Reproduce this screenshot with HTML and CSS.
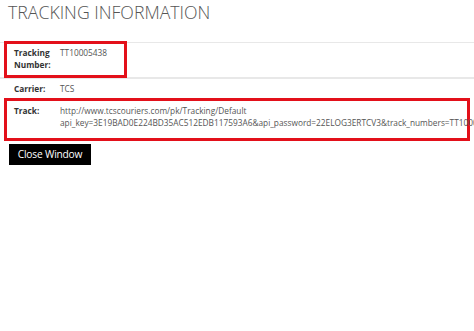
FILE: index.html
```html
<!DOCTYPE html>
<html lang="en">
<head>
    <meta charset="UTF-8">
    <meta name="viewport" content="width=device-width, initial-scale=1.0">
    <title>Tracking Information</title>
    <link rel="stylesheet" href="styles.css">
</head>
<body>
    <div class="page">
        <h1 class="title">TRACKING INFORMATION</h1>

        <div class="info">
            <div class="row row-first">
                <div class="mark mark-short">
                    <div class="label">Tracking Number:</div>
                    <div class="value">TT10005438</div>
                </div>
            </div>
            <div class="row">
                <div class="cell">
                    <div class="label">Carrier:</div>
                    <div class="value">TCS</div>
                </div>
            </div>
            <div class="row row-track">
                <div class="mark mark-wide">
                    <div class="label">Track:</div>
                    <div class="value url">http://www.tcscouriers.com/pk/Tracking/Default<br>api_key=3E19BAD0E224BD35AC512EDB117593A6&amp;api_password=22ELOG3ERTCV3&amp;track_numbers=TT10005438</div>
                </div>
            </div>
        </div>

        <button class="close-btn" onclick="window.close()">Close Window</button>
    </div>
</body>
</html>
```

FILE: styles.css
```css
body {
    margin: 0;
    background-color: #fff;
    font-family: "Open Sans", Arial, sans-serif;
    overflow-x: hidden;
}
.page {
    width: 474px;
}
.title {
    margin: 0 0 18px 8px;
    font-size: 17.7px;
    font-weight: 300;
    line-height: 24px;
    color: #555;
}
.info {
    font-size: 8.3px;
    line-height: 12px;
    color: #555;
}
.row {
    border-top: 1px solid #e8e8e8;
}
.row-first {
    border-bottom: 1px solid #e8e8e8;
}
.row-track {
    border-top: none;
}
.mark,
.cell {
    display: flex;
}
.mark {
    border: 3px solid #e3101a;
    margin-left: 4px;
}
.mark-short {
    width: 110px;
    padding: 3px 0 4px 7px;
    margin-top: -2px;
    margin-bottom: -1px;
}
.mark-wide {
    width: 453px;
    padding: 4px 0 9px 7px;
}
.cell {
    padding: 4px 0 3px 14px;
}
.label {
    width: 46px;
    flex-shrink: 0;
    font-weight: 700;
    color: #333;
}
.value {
    white-space: nowrap;
}
.url {
    color: #555;
}
.close-btn {
    display: block;
    margin: 3px 0 0 9px;
    width: 82px;
    height: 21px;
    padding: 0;
    border: none;
    background-color: #000;
    color: #fff;
    font-family: "Open Sans", Arial, sans-serif;
    font-size: 10.2px;
    letter-spacing: -0.2px;
    line-height: 21px;
    cursor: pointer;
}
```
